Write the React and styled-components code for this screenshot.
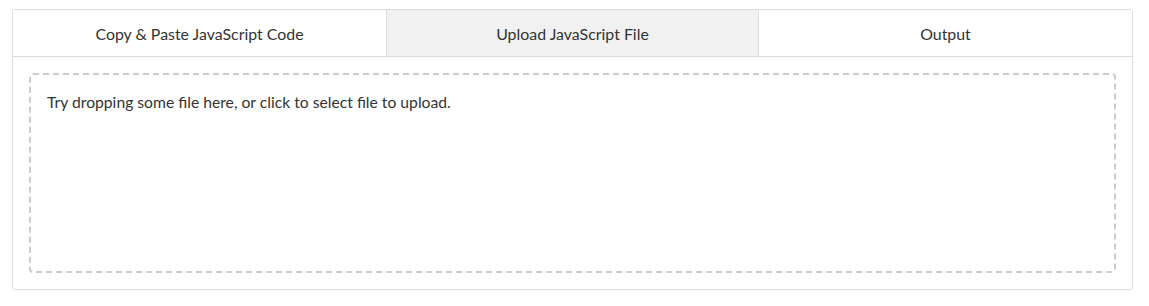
import React, { useState } from "react";
import styled, { createGlobalStyle } from "styled-components";

const GlobalStyle = createGlobalStyle`
  body {
    margin: 0;
    background: #ffffff;
    font-family: Lato, "Open Sans", sans-serif;
  }
`;

const Page = styled.div`
  padding: 9px 16px 16px 12px;
`;

const Card = styled.div`
  border: 1px solid #dcdcdc;
  border-radius: 3px;
  background: #fff;
`;

const Tabs = styled.div`
  display: grid;
  grid-template-columns: 1fr 1fr 1fr;
  border-bottom: 1px solid #dcdcdc;
`;

const Tab = styled.button`
  height: 46px;
  border: none;
  border-left: 1px solid ${(p) => (p.$active ? "#dcdcdc" : "transparent")};
  border-right: 1px solid ${(p) => (p.$active ? "#dcdcdc" : "transparent")};
  background: ${(p) => (p.$active ? "#f1f1f1" : "#fff")};
  font-family: Lato, "Open Sans", sans-serif;
  font-size: 15.9px;
  color: #333;
  cursor: pointer;
  padding: 0;
`;

const Body = styled.div`
  padding: 16px;
`;

const DropZone = styled.div`
  height: 200px;
  border: 2px dashed #cccccc;
  border-radius: 4px;
  padding: 18px 16px;
  box-sizing: border-box;
  font-size: 15.7px;
  color: #333;
  cursor: pointer;
`;

const tabs = ["Copy & Paste JavaScript Code", "Upload JavaScript File", "Output"];

export default function App() {
  const [active, setActive] = useState(1);
  return (
    <>
      <GlobalStyle />
      <Page>
        <Card>
          <Tabs>
            {tabs.map((t, i) => (
              <Tab key={t} $active={i === active} onClick={() => setActive(i)}>
                {t}
              </Tab>
            ))}
          </Tabs>
          <Body>
            <DropZone>Try dropping some file here, or click to select file to upload.</DropZone>
          </Body>
        </Card>
      </Page>
    </>
  );
}
